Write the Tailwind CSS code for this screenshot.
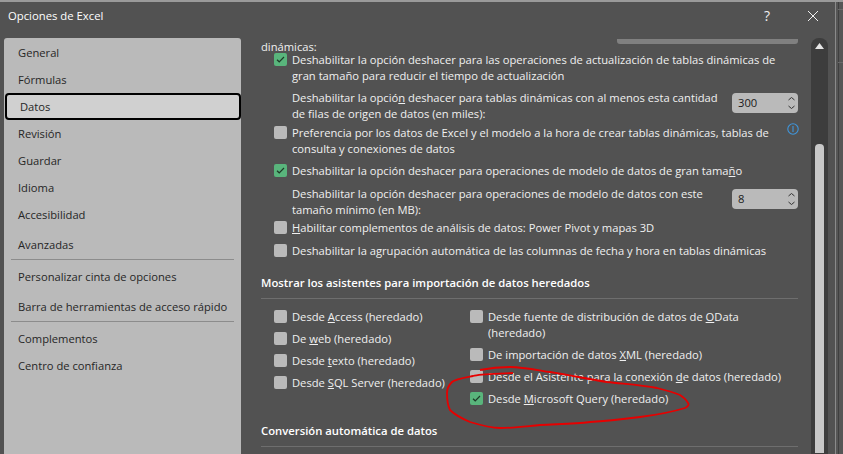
<!DOCTYPE html>
<html lang="es">
<head>
    <meta charset="UTF-8">
    <title>Opciones de Excel</title>
    <script src="https://cdn.jsdelivr.net/npm/@tailwindcss/browser@4"></script>
</head>
<body class="bg-[#525252] overflow-hidden">
    <div class="relative w-[843px] h-[454px] overflow-hidden border-t-2 border-[#9a9a9a] font-['Open_Sans',sans-serif] text-[11.2px] leading-[16px] text-[#f0f0f0] whitespace-nowrap">
        <div class="flex items-start pt-[6px] h-[36px] pl-2 w-[835px]">
            <span class="flex-1 text-[11.3px] text-white">Opciones de Excel</span>
            <span class="w-5 mr-[30px] text-center text-[14px]">?</span>
            <svg class="w-3 h-3 mr-[16px] mt-[2px]" viewBox="0 0 12 12" fill="none" stroke="#f0f0f0"><path d="M1 1l10 10M11 1L1 11"/></svg>
        </div>

        <div class="flex h-[416px]">
            <!-- menu lateral -->
            <div class="w-[237px] ml-1 bg-[#bababa] rounded-t-[3px] text-[#262626] py-[1px]">
                <div class="h-[27px] flex items-center pl-[14px]">General</div>
                <div class="h-[27px] flex items-center pl-[14px]">Fórmulas</div>
                <div class="h-[27px] flex items-center pl-[13px] bg-[#d0d0d0] border-2 border-black rounded-[4px] ml-[1px]">Datos</div>
                <div class="h-[27px] flex items-center pl-[14px]">Revisión</div>
                <div class="h-[27px] flex items-center pl-[14px]">Guardar</div>
                <div class="h-[27px] flex items-center pl-[14px]">Idioma</div>
                <div class="h-[27px] flex items-center pl-[14px]">Accesibilidad</div>
                <div class="h-[32px] flex items-center pl-[7px] border-b border-[#8c8c8c] mx-[7px] mb-[3px] pt-[3px]">Avanzadas</div>
                <div class="h-[27px] flex items-center pl-[14px]">Personalizar cinta de opciones</div>
                <div class="h-[32px] flex items-center pl-[7px] border-b border-[#8c8c8c] mx-[7px] mb-[3px] pt-[3px]">Barra de herramientas de acceso rápido</div>
                <div class="h-[27px] flex items-center pl-[14px]">Complementos</div>
                <div class="h-[27px] flex items-center pl-[14px]">Centro de confianza</div>
            </div>

            <!-- contenido -->
            <div class="w-[558px] ml-[19px] h-[416px] overflow-hidden">
                <div class="h-[2px]"></div>
                <div class="flex pl-[1px] h-[17px] items-start"><span class="flex-1 -mt-[1px]">dinámicas:</span><span class="w-[181px] h-[5px] mr-[20px] -mt-[1px] bg-[#808080] rounded-b-[3px]"></span></div>

                <div class="flex gap-[5px] pl-[14px] pr-[20px] mt-[-5px]">
                    <span class="w-[13px] h-[13px] mt-[1px] shrink-0 bg-[#59b57c] rounded-[2px] flex items-center justify-center"><svg class="w-[9px] h-[9px]" viewBox="0 0 9 9" fill="none" stroke="#1e3a28" stroke-width="1.2"><path d="M1 4.8l2.2 2 4.8-4.8"/></svg></span>
                    <span>Deshabilitar la opción deshacer para las operaciones de actualización de tablas dinámicas de<br>gran tamaño para reducir el tiempo de actualización</span>
                </div>

                <div class="flex items-start pl-[32px] pr-[20px] mt-[6px]">
                    <span class="flex-1">Deshabilitar la opció<u>n</u> deshacer para tablas dinámicas con al menos esta cantidad<br>de filas de origen de datos (en miles):</span>
                    <span class="w-[66px] h-[20px] mt-[3px] ml-[8px] bg-[#bababa] rounded-[4px] text-[#1a1a1a] flex items-center justify-between pl-[6px] pr-[2px]">300<svg class="w-[9px] h-[14px]" viewBox="0 0 9 14" fill="none" stroke="#333"><path d="M1.5 4l3-2.5 3 2.5M1.5 10l3 2.5 3-2.5"/></svg></span>
                </div>

                <div class="flex gap-[5px] pl-[14px] pr-[20px] mt-[3px]">
                    <span class="w-[13px] h-[13px] mt-[1px] shrink-0 bg-[#bababa] rounded-[2px]"></span>
                    <span class="flex-1">Preferencia por los datos de Excel y el modelo a la hora de crear tablas dinámicas, tablas de<br>consulta y conexiones de datos</span>
                    <svg class="w-3 h-3 -mr-[1px] -mt-[2px]" viewBox="0 0 12 12" fill="none" stroke="#3f96dc" stroke-width="1.1"><circle cx="6" cy="6" r="5.2"/><path d="M6 3v6"/></svg>
                </div>

                <div class="flex gap-[5px] pl-[14px] pr-[20px] mt-[6px]">
                    <span class="w-[13px] h-[13px] mt-[1px] shrink-0 bg-[#59b57c] rounded-[2px] flex items-center justify-center"><svg class="w-[9px] h-[9px]" viewBox="0 0 9 9" fill="none" stroke="#1e3a28" stroke-width="1.2"><path d="M1 4.8l2.2 2 4.8-4.8"/></svg></span>
                    <span>Deshabilitar la opción deshacer para operaciones de modelo de datos de gran tama<u>ñ</u>o</span>
                </div>

                <div class="flex items-start pl-[32px] pr-[20px] mt-[7px]">
                    <span class="flex-1">Deshabilitar la opción deshacer para operaciones de modelo de datos con este<br>tamaño mínimo (en MB):</span>
                    <span class="w-[66px] h-[20px] mt-[3px] ml-[8px] bg-[#bababa] rounded-[4px] text-[#1a1a1a] flex items-center justify-between pl-[6px] pr-[2px]">8<svg class="w-[9px] h-[14px]" viewBox="0 0 9 14" fill="none" stroke="#333"><path d="M1.5 4l3-2.5 3 2.5M1.5 10l3 2.5 3-2.5"/></svg></span>
                </div>

                <div class="flex gap-[5px] pl-[14px] mt-[2px]">
                    <span class="w-[13px] h-[13px] mt-[1px] shrink-0 bg-[#bababa] rounded-[2px]"></span>
                    <span><u>H</u>abilitar complementos de análisis de datos: Power Pivot y mapas 3D</span>
                </div>
                <div class="flex gap-[5px] pl-[14px] mt-[7px]">
                    <span class="w-[13px] h-[13px] mt-[1px] shrink-0 bg-[#bababa] rounded-[2px]"></span>
                    <span>Deshabilitar la agrupación automática de las columnas de fecha y hora en tablas dinámicas</span>
                </div>

                <div class="mt-[16px] pb-[7px] ml-[1px] mr-[20px] border-b border-[#6e6e6e] font-semibold text-[11.3px] text-white">Mostrar los asistentes para importación de datos heredados</div>

                <div class="flex pl-[14px] mt-[10px]">
                    <div class="w-[196px] flex flex-col gap-[6px]">
                        <div class="flex gap-[5px]"><span class="w-[13px] h-[13px] mt-[1px] shrink-0 bg-[#bababa] rounded-[2px]"></span><span>Desde <u>A</u>ccess (heredado)</span></div>
                        <div class="flex gap-[5px]"><span class="w-[13px] h-[13px] mt-[1px] shrink-0 bg-[#bababa] rounded-[2px]"></span><span>De <u>w</u>eb (heredado)</span></div>
                        <div class="flex gap-[5px]"><span class="w-[13px] h-[13px] mt-[1px] shrink-0 bg-[#bababa] rounded-[2px]"></span><span>Desde <u>t</u>exto (heredado)</span></div>
                        <div class="flex gap-[5px]"><span class="w-[13px] h-[13px] mt-[1px] shrink-0 bg-[#bababa] rounded-[2px]"></span><span>Desde <u>S</u>QL Server (heredado)</span></div>
                    </div>
                    <div class="flex flex-col gap-[6px] flex-1">
                        <div class="flex gap-[5px]"><span class="w-[13px] h-[13px] mt-[1px] shrink-0 bg-[#bababa] rounded-[2px]"></span><span>Desde fuente de distribución de datos de <u>O</u>Data<br>(heredado)</span></div>
                        <div class="flex gap-[5px]"><span class="w-[13px] h-[13px] mt-[1px] shrink-0 bg-[#bababa] rounded-[2px]"></span><span>De importación de datos <u>X</u>ML (heredado)</span></div>
                        <div class="flex gap-[5px]"><span class="w-[13px] h-[13px] mt-[1px] shrink-0 bg-[#bababa] rounded-[2px]"></span><span>Desde el Asistente para la conexión <u>d</u>e datos (heredado)</span></div>
                        <div class="flex gap-[5px]"><span class="w-[13px] h-[13px] mt-[1px] shrink-0 bg-[#59b57c] rounded-[2px] flex items-center justify-center"><svg class="w-[9px] h-[9px]" viewBox="0 0 9 9" fill="none" stroke="#1e3a28" stroke-width="1.2"><path d="M1 4.8l2.2 2 4.8-4.8"/></svg></span><span>Desde <u>M</u>icrosoft Query (heredado)</span></div>
                    </div>
                </div>

                <div class="mt-[16px] pb-[7px] ml-[1px] mr-[20px] border-b border-[#6e6e6e] font-semibold text-[11.3px] text-white">Conversión automática de datos</div>
            </div>

            <!-- barra de desplazamiento -->
            <div class="w-[17px] ml-[-7px] h-[416px] bg-[#3d3d3d] rounded-t-[8px] relative flex flex-col items-center">
                <svg class="w-[9px] h-[6px] mt-[5px]" viewBox="0 0 9 6" fill="#e6e6e6"><path d="M4.5 0L9 6H0z"/></svg>
                <div class="w-[9px] h-[309px] mt-[95px] bg-[#c8c8c8] rounded-t-[4px]"></div>
            </div>
        </div>

        <!-- borde de la ventana y lo que queda detrás -->
        <div class="absolute left-[835px] top-[-2px] w-[8px] h-[454px] bg-[#565656] border-l border-[#8a8a8a]">
            <div class="absolute left-[2px] top-0 w-px h-full bg-[#3f3f3f]"></div>
            <div class="absolute left-[2px] top-[9px] w-[6px] h-px bg-[#6a6a6a]"></div>
            <div class="absolute left-[2px] top-[62px] w-[6px] h-px bg-[#6a6a6a]"></div>
        </div>

        <!-- marca roja a mano -->
        <svg class="absolute left-0 top-[-2px] pointer-events-none" width="843" height="454" viewBox="0 0 843 454" fill="none" stroke="#e60000" stroke-width="1.8">
            <path d="M513 373C495 374 480 374 473 376C462 378 455 379 452 382C448 386 447 390 447 393C447 400 448 406 450 410C456 416 463 419 470 422C480 425 490 428 500 428C515 428 528 426 540 425C557 424 574 424 590 422C607 421 624 419 640 417C656 415 672 412 685 408C689 406 689 404 688 403C686 399 683 397 680 395C673 392 665 390 657 388C640 385 624 384 607 382C588 379 569 375 550 372C537 370 523 367 510 367C500 367 490 368 480 370"/>
        </svg>
    </div>
</body>
</html>
